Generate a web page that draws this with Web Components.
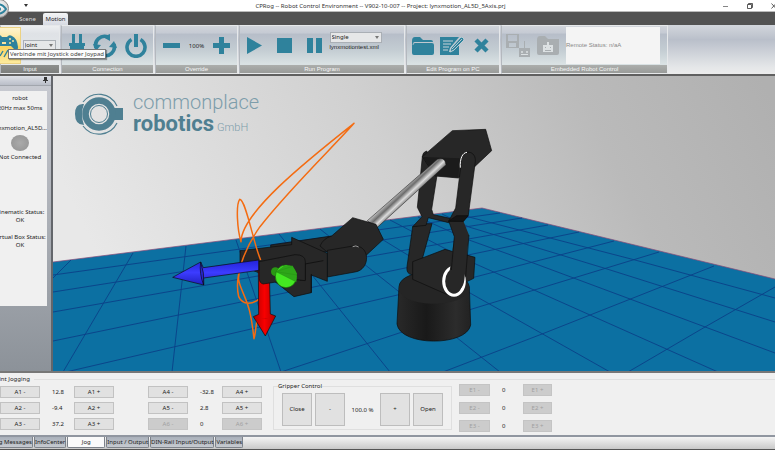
<!DOCTYPE html>
<html lang="en">
<head>
<meta charset="utf-8">
<title>CPRog - Robot Control Environment</title>
<style>
  html, body { margin: 0; height: 100%; }
  body { font: 6px/8px "Noto Sans", "Open Sans", sans-serif; color: #222; background: #f0f0f0; overflow: hidden; }
</style>
</head>
<body>
<cprog-app></cprog-app>

<script>
const define = (name, html) => {
  customElements.define(name, class extends HTMLElement {
    constructor() {
      super();
      this.attachShadow({ mode: 'open' });
    }
    connectedCallback() {
      if (this.shadowRoot.childNodes.length) return;
      this.shadowRoot.innerHTML = typeof html === 'function' ? html(this) : html;
    }
  });
};

/* ---------- icons ---------- */
const ICONS = {
  gamepad: [28, 24, '<path d="M8 2Q10 0 12 3H17Q19 0 22 2Q27 4 28 13Q28 17 25 16L21 12H8L4 16Q0 17 1 12Q2 4 8 2Z"/><g fill="#f8e3a0"><circle cx="20" cy="5" r="1"/><circle cx="23" cy="7" r="1"/><circle cx="20" cy="9" r="1"/><path d="M12 8h4v2h-4z"/></g><path d="M13 17l-3 5M18 16l-4 7M22 17l-3 4" stroke="currentColor" stroke-width="1.4"/>'],
  plug: [16, 24, '<path d="M4 0h2v9h4V0h2v9h4v3h-1v4q0 3-5 4v4H6v-4q-5-1-5-4v-4H0V9h4z"/><path d="M3 0h3v9H3zM10 0h3v9h-3z"/>'],
  refresh: [24, 24, '<path d="M3 14A9 9 0 0 1 15 3M21 10A9 9 0 0 1 9 21" fill="none" stroke="currentColor" stroke-width="3.6"/><path d="M0 10L8 11L3 17ZM24 14L16 13L21 7ZM7 17L14 21L7 24ZM17 7L10 3L17 0Z"/>'],
  power: [22, 24, '<path d="M6.500 5.500A9 9 0 1 0 15.500 5.500" fill="none" stroke="currentColor" stroke-width="3.600"/><path d="M9 0h4v13H9z"/>'],
  minus: [17, 17, '<path d="M0 6h17v5H0z"/>'],
  plus: [17, 17, '<path d="M6 0h5v6h6v5h-6v6H6v-6H0V6h6z"/>'],
  play: [15, 17, '<path d="M0 0L15 8.500L0 17Z"/>'],
  stop: [15, 15, '<path d="M0 0h15v15H0z"/>'],
  pause: [15, 15, '<path d="M0 0h6v15H0zM9 0h6v15H9z"/>'],
  folder: [22, 18, '<path d="M0 4Q0 0 3 0h5l3 3h8q2 0 2 2H3Q1 5 1 7L0 8ZM0 8Q0 6 3 6H20Q22 6 22 8V16Q22 18 20 18H2Q0 18 0 16Z"/><path d="M1 8Q1 5.500 3 5.500H20" fill="none" stroke="#c3c9d0" stroke-width=".7"/>'],
  edit: [25, 18, '<path d="M0 0H19L10 11L9 15L13 14L19 7V18H0Z"/><path d="M3 4h10M3 7h8M3 10h6M3 13h5" stroke="#c8d2d8"/><path d="M11 11L21 0Q24 0 24 3L14 13L10 15Z" stroke="#d3dade" stroke-width=".8"/><path d="M12 12L22 2" stroke="#d3dade" stroke-width=".8"/>'],
  cross: [15, 15, '<path d="M2 2L13 13M13 2L2 13" stroke="currentColor" stroke-width="4.400"/>'],
  saverobot: [25, 24, '<path fill-rule="evenodd" d="M0 0h13v14H0zM2 1v6h9V1zM3 9v4h7V9zM18 7h1v7h5v9H13v-9h5z"/><g fill="#dce1e3"><circle cx="16" cy="18" r="1"/><circle cx="21" cy="18" r="1"/><path d="M15 20h7v1h-7z"/></g>'],
  openrobot: [22, 19, '<path d="M0 4Q0 0 3 0h5l3 3h11V17Q22 19 20 19H2Q0 19 0 17Z"/><path d="M6 9h4V6h2v3h4v7H6z" fill="#dce1e3"/><path d="M8 11h1v1H8zM13 11h1v1h-1zM8 14h6v1H8z"/>'],
  eye: [16, 12, '<path d="M0 6Q8-3 14 6Q8 15 0 6Z" fill="none" stroke="currentColor" stroke-width="2"/><circle cx="7" cy="6" r="2"/>'],
  pin: [6, 6, '<path d="M2 0h3v3h1v1H4v2H3V4H1V3h1z"/>'],
  min: [6, 6, '<path d="M0 3h5v.6H0z"/>'],
  max: [6, 6, '<path d="M.5 1.500h4v4h-4zM1.500 1.500V.5h4v4h-1" fill="none" stroke="currentColor" stroke-width=".8"/>'],
  close: [6, 6, '<path d="M.5 .5L5 5.500M5 .5L.5 5.500" stroke="currentColor" stroke-width=".8"/>'],
  down: [4, 3, '<path d="M0 0h4L2 3z"/>']
};
define('ui-icon', el => {
  const [w, h, body] = ICONS[el.getAttribute('name')];
  return `<style>:host{display:block;flex:none;line-height:0}svg{display:block;fill:currentColor}</style>
    <svg width="${w}" height="${h}" viewBox="0 0 ${w} ${h}" aria-hidden="true">${body}</svg>`;
});

define('icon-button', el => `
  <style>
    :host { display: block; flex: none; }
    button { display: grid; place-items: center; padding: 0; border: 0; background: none; color: inherit; }
  </style>
  <button type="button" aria-label="${el.getAttribute('label')}" ${el.hasAttribute('disabled') ? 'disabled' : ''}>
    <ui-icon name="${el.getAttribute('icon')}"></ui-icon></button>`);

/* ---------- title bar ---------- */
define('title-bar', `
  <style>
    :host { display: grid; grid-template-columns: 1fr auto 1fr; align-items: center; height: 11px; background: #fff; color: #333; border-bottom: 1px solid #bbb; position: relative; }
    .orb { position: absolute; z-index: 2; left: -10px; top: -1px; width: 19px; height: 19px; border-radius: 50%; border: 1px solid #888;
           background: radial-gradient(circle at 50% 35%, #fff, #ccc 70%, #aaa); color: #2f829c; display: grid; place-items: center; overflow: hidden; padding: 0; }
    .quick { padding-left: 24px; }
    .win { display: flex; justify-content: flex-end; gap: 18px; }
    .win icon-button:last-child { margin-right: -2px; }
    h1 { margin: 0; padding-right: 14px; font: 6px/8px "Noto Sans", sans-serif; white-space: nowrap; }
  </style>
  <button class="orb" aria-label="Application menu"><ui-icon name="eye"></ui-icon></button>
  <div class="quick"><ui-icon name="down"></ui-icon></div>
  <h1>CPRog -- Robot Control Environment -- V902-10-007 -- Project: lynxmotion_AL5D_5Axis.prj</h1>
  <div class="win"><icon-button icon="min" label="Minimize"></icon-button><icon-button icon="max" label="Restore"></icon-button><icon-button icon="close" label="Close"></icon-button></div>`);

/* ---------- ribbon ---------- */
define('ribbon-tabs', `
  <style>
    :host { display: flex; align-items: flex-end; height: 13px; padding-left: 12px; background: #525252; }
    button { font: 6px/11px "Noto Sans", sans-serif; height: 12px; padding: 0 4px; border: 0; background: none; color: #ddd; width: 31px; }
    button[aria-selected=true] { background: linear-gradient(#f4f5f6, #d6dae2); color: #222; border-radius: 2px 2px 0 0; width: 25px; padding: 0; }
  </style>
  <button role="tab" aria-selected="false">Scene</button><button role="tab" aria-selected="true">Motion</button>`);

define('ribbon-group', el => `
  <style>
    :host { display: flex; flex-direction: column; flex: none; box-sizing: border-box; height: 49px; border: 1px solid #e6e8ea; border-left-color: #b4b8be;
            background: linear-gradient(#d0d4da 0, #c6cbd4 14%, #b7bec9 18%, #c3ccd2 50%, #d9e1e3 80%); color: #2f829c; }
    .body { flex: 1; display: flex; align-items: center; justify-content: center; gap: var(--gap, 8px); padding: 0 4px; min-height: 0; }
    .cap { height: 8px; background: linear-gradient(#acaeac, #999b99); color: #f8f8f8; font: 6px/8px "Liberation Sans", sans-serif; text-align: center; }
    :host([active]) .body { background: linear-gradient(#eceef0, #dfe2e6 20%, #e6eaec); }
    :host([active]) .cap { background: linear-gradient(#8e908e, #7c7e7c); }
  </style>
  <div class="body"><slot></slot></div><div class="cap">${el.getAttribute('caption')}</div>`);

define('drop-down', el => `
  <style>
    :host { display: flex; align-items: center; box-sizing: border-box; height: 11px; background: #e6e7e8; border: 1px solid #aaafb5; color: #222; }
    select { appearance: none; flex: 1; min-width: 0; border: 0; padding: 0 0 0 1px; background: none; color: inherit; font: 6px/9px "Noto Sans", sans-serif; }
    ui-icon { margin-right: 2px; color: #777; }
  </style>
  <select aria-label="${el.getAttribute('label')}"><option>${el.getAttribute('value')}</option></select>
  <ui-icon name="down"></ui-icon>`);

define('ribbon-bar', `
  <style>
    :host { display: flex; gap: 1px; height: 49px; background: linear-gradient(#d2d6dc, #c2c7d0 20%, #b9bfca 30%, #e4e6e8 85%, #ececec); border-bottom: 2px solid #606060; position: relative; }
    .input { width: 60px; --gap: 2px; }
    .pad { display: grid; place-items: center; flex: none; box-sizing: border-box; width: 34px; height: 37px; margin-left: -18px; background: linear-gradient(#fdf4cf, #fbe08a 45%, #fbd45f 55%, #fdeb9e); border: 1px solid #ecd283; }
    .mode { flex: none; width: 33px; }
    .run { display: grid; width: 52px; color: #222; font: 6px/8px "Liberation Sans", sans-serif; margin: -8px 16px 0 -7px; }
    .edit { width: 94px; --gap: 6px; }
    .edit icon-button:last-child { margin: 0 6px 0 3px; }
    .off { color: #a9aeb1; width: 167px; --gap: 6px; }
    output { box-sizing: border-box; width: 95px; height: 37px; margin: 0 3px 0 1px; background: #f4f4f4; color: #888; font: 6px/37px "Liberation Sans", sans-serif; }
    .tip { position: absolute; z-index: 3; left: 8px; top: 24px; box-sizing: border-box; height: 10px; padding: 0 1px; border: 1px solid #777; background: #fcfcfc; color: #444; font: 6px/8px "Noto Sans", sans-serif; white-space: nowrap; box-shadow: 1px 1px 1px #0005; }
    .pct { width: 17px; text-align: center; color: #222; }
  </style>
  <ribbon-group active class="input" caption="Input">
    <span class="pad"><icon-button icon="gamepad" label="Verbinde mit Joystick oder Joypad"></icon-button></span>
    <drop-down class="mode" label="Jog mode" value="Joint"></drop-down>
  </ribbon-group>
  <ribbon-group caption="Connection" style="width:93px">
    <icon-button icon="plug" label="Connect"></icon-button><icon-button icon="refresh" label="Reset"></icon-button><icon-button icon="power" label="Enable"></icon-button>
  </ribbon-group>
  <ribbon-group caption="Override" style="width:83px">
    <icon-button icon="minus" label="Slower"></icon-button><span class="pct">100%</span><icon-button icon="plus" label="Faster"></icon-button>
  </ribbon-group>
  <ribbon-group caption="Run Program" style="width:166px;--gap:15px">
    <icon-button icon="play" label="Play"></icon-button><icon-button icon="stop" label="Stop"></icon-button><icon-button icon="pause" label="Pause"></icon-button>
    <div class="run"><drop-down label="Run mode" value="Single"></drop-down><span>lynxmotiontest.xml</span></div>
  </ribbon-group>
  <ribbon-group class="edit" caption="Edit Program on PC">
    <icon-button icon="folder" label="Open program"></icon-button><icon-button icon="edit" label="Edit program"></icon-button><icon-button icon="cross" label="Close program"></icon-button>
  </ribbon-group>
  <ribbon-group class="off" caption="Embedded Robot Control">
    <icon-button disabled icon="saverobot" label="Save to robot"></icon-button><icon-button disabled icon="openrobot" label="Open on robot"></icon-button>
    <output>Remote Status: n/aA</output>
  </ribbon-group>
  <div class="tip" role="tooltip">Verbinde mit Joystick oder Joypad</div>`);

/* ---------- side panel ---------- */
define('status-panel', `
  <style>
    :host { display: flex; flex-direction: column; box-sizing: border-box; width: 53px; overflow: hidden; background: linear-gradient(#c9cbd2, #8c9299); border-right: 2px solid #63666b; }
    header { display: flex; justify-content: flex-end; height: 10px; padding: 1px 3px 0 0; box-sizing: border-box; background: linear-gradient(#dde0e6, #babec8); color: #333; border-bottom: 1px solid #a2a6ad; }
    section { flex: none; box-sizing: border-box; height: 215px; margin: 5px 4px 0 -7px; padding-top: 3px; background: #f0f0f0; display: flex; flex-direction: column; align-items: center; white-space: nowrap; }
    p { margin: 0; }
    .rate { margin-top: 2px; } .name { margin-top: 12px; }
    .led { width: 18px; height: 16px; margin: 3px 0 2px; border-radius: 50%; background: radial-gradient(#aaa, #929292); }
    .kin { margin-top: 47px; } .box { margin-top: 9px; }
  </style>
  <header><icon-button icon="pin" label="Pin panel"></icon-button></header>
  <section>
    <p>robot</p><p class="rate">20Hz max 50ms</p><p class="name">lynxmotion_AL5D...</p>
    <div class="led"></div><p>Not Connected</p>
    <p class="kin">Kinematic Status:</p><p>OK</p><p class="box">Virtual Box Status:</p><p>OK</p>
  </section>`);

/* ---------- 3D view ---------- */
define('robot-view', `
  <style>
    :host { display: block; flex: 1; min-width: 0; background: #c4c4c4; overflow: hidden; }
    svg { display: block; width: 100%; height: 100%; }
    text { font-family: Roboto, sans-serif; }
  </style>
  <svg viewBox="53 76 722 296" preserveAspectRatio="xMinYMin slice" role="img" aria-label="Robot arm in 3D view">
    <defs>
      <linearGradient id="wall" x1="0" y1=".3" x2="1" y2=".1"><stop offset="0" stop-color="#e8e8e8"/><stop offset=".45" stop-color="#d0d0d0"/><stop offset=".75" stop-color="#bababa"/><stop offset="1" stop-color="#b0b0b0"/></linearGradient>
      <linearGradient id="rod" gradientUnits="userSpaceOnUse" x1="150" y1="202" x2="178" y2="232"><stop offset="0" stop-color="#e8e8e8"/><stop offset=".25" stop-color="#aaa"/><stop offset=".5" stop-color="#6c6c6c"/><stop offset=".8" stop-color="#ddd"/><stop offset="1" stop-color="#999"/></linearGradient>
      <linearGradient id="base"><stop offset="0" stop-color="#292929"/><stop offset=".4" stop-color="#191919"/><stop offset=".8" stop-color="#2c2c2c"/><stop offset="1" stop-color="#222"/></linearGradient>
      <linearGradient id="blue" x2="0" y2="1"><stop offset="0" stop-color="#2222d8"/><stop offset=".5" stop-color="#3c3cff"/><stop offset="1" stop-color="#2020c0"/></linearGradient>
      <linearGradient id="red"><stop offset="0" stop-color="#b00000"/><stop offset=".5" stop-color="#f80000"/><stop offset="1" stop-color="#b00000"/></linearGradient>
    </defs>
    <path fill="url(#wall)" d="M53 76h722v296H53z"/>
    <path fill="#0c70a2" d="M53 262L482 208L775 279V372H53Z"/>
    <path fill="none" stroke="#8a4a78" stroke-width=".7" d="M53 262L482 208L775 279"/>
    <path fill="none" stroke="#0b4188" stroke-width=".9" d="M53 275L500 213M53 292L522 218M53 312L548 225M53 341L579 232M53 375L475 277L614 241M281 372L472 309L659 252M443 372L542 334L714 266M628 372L705 327L775 287
      M71 260L53 278M133 253L63 372M186 246L172 372M236 240L281 372M279 234L390 372M320 229L500 372M357 224L470 293L610 372M390 220L469 261L590 315L718 372M418 217L469 240L536 264L775 353M442 214L469 227L607 269L775 322M462 211L469 217L635 260L775 298"/>

    <g fill="#4f7f91">
      <path d="M84 104Q75 103 75 114Q75 125 84 125Q80 114 84 104ZM112 108H123V120H112Z"/>
      <circle cx="99" cy="114" r="13.500" fill="none" stroke="#4f7f91" stroke-width="6.500"/>
      <path d="M117 106A20 20 0 0 0 83 102M117 123A20 20 0 0 1 83 126" fill="none" stroke="#4f7f91" stroke-width="1.200"/>
      <circle cx="99" cy="114" r="8.500" fill="none" stroke="#4f7f91"/>
    </g>
    <text x="133" y="109" font-size="20" font-weight="300" fill="#7d9dab">commonplace</text>
    <text x="133" y="131" font-size="22" font-weight="700" fill="#4f7f91">robotics</text>
    <text x="217" y="131" font-size="11" font-weight="300" fill="#7d9dab">GmbH</text>

    <g transform="translate(350 120) scale(.33333)" stroke="#0c0c0c" stroke-width="2" stroke-linejoin="round" fill="#272727">
      <path fill="url(#base)" d="M147 500L141 612C150 680 350 680 362 615L358 500C350 440 150 440 147 500Z"/>
      <path stroke="none" fill="#252525" d="M147 505C150 567 352 567 358 505C350 440 150 440 147 505Z"/>
      <path d="M340 402L375 412L371 475L340 490Z"/>
      <path d="M188 320L230 311H246L216 420L195 464H186Q168 462 171 440Z"/>
      <path d="M188 425L285 388L340 404L330 510L290 523L188 478Z"/>
      <path d="M217 110Q218 96 230 93L262 160L245 268L250 284L300 295L320 300L296 308L235 293L228 316L188 320L216 290L202 262Z"/>
      <ellipse cx="312" cy="484" rx="31" ry="42" stroke="#fff" stroke-width="9"/>
      <path d="M296 303H340L357 345L343 480C338 520 298 528 294 490L313 350Z" stroke="none"/>
      <path d="M357 345L347 470M313 350L304 450M296 303L313 350" fill="none"/>
      <path d="M217 110L307 32L407 28L425 92L374 140L325 174L255 168Z"/>
      <path fill="#1b1b1b" stroke="none" d="M219 111L330 115L325 173L255 167Z"/>
      <path d="M332 142V125C333 86 379 88 376 125L355 285L340 304H296L317 264Z"/>
      <path d="M331 143C329 115 338 98 351 97" fill="none" stroke="#fff" stroke-width="3"/>
      <path d="M296 303L320 287H355L340 304Z" fill="#151515"/>
      <path d="M52 302L262 118Q284 108 288 134L80 324Z" fill="url(#rod)" stroke-width="1.500"/>
    </g>

    <g transform="translate(160 110) scale(.33333)" stroke="#0c0c0c" stroke-width="2" stroke-linejoin="round" fill="#272727">
      <path d="M332 405L515 378L500 425L332 430Z"/>
      <path d="M578 323L648 343L670 388L612 442L500 425L480 408Q490 385 515 378Z"/>
      <path d="M502 421L580 408C630 402 634 478 585 486L502 501Z"/>
      <path d="M578 410Q588 405 596 411" fill="none" stroke="#ddd"/>
      <path d="M240 422L395 404V382L502 430V514L454 495V548L402 560L345 515L300 490L240 465Z"/>
      <path d="M435 462L490 452M435 462V510H420M454 492V548" fill="none" stroke="#080808"/>
      <path fill="none" stroke="#f46c12" stroke-width="4.500" d="M302 450C280 400 258 270 239 268C227 285 232 360 243 395C244 310 430 160 582 40C530 100 390 235 300 350C252 418 222 500 236 560C250 590 280 580 296 568M240 525C260 580 270 580 282 686C288 665 287 640 294 620M242 460V480C230 500 238 520 240 525"/>
      <path fill="url(#red)" d="M295 480H328L331 612L347 618L316 678L280 620L296 613Z"/>
      <path fill="#c00000" stroke="none" d="M281 620Q315 630 346 619L316 626Z"/>
      <path d="M297 455L405 434Q436 434 436 455V512L400 508L310 522Q298 520 298 505Z"/>
      <path fill="url(#blue)" d="M130 473L296 450V481L131 504V525L38 502L122 456Z"/>
      <path fill="#2626c8" d="M122 456Q134 488 131 525Q117 490 122 456Z"/>
      <circle cx="346" cy="485" r="13" fill="#2a9814" stroke="none"/>
      <ellipse cx="378" cy="499" rx="32" ry="34" fill="#44e822" stroke="#176a0a"/>
      <path fill="#2ea719" stroke="none" d="M348 485L372 467H398L410 490L409 516Z"/>
      <path fill="none" stroke="#1f8a10" stroke-width="1" d="M348 485L409 516M348 485L411 495M348 485L398 469"/>
    </g>
  </svg>`);

/* ---------- jogging panel ---------- */
define('jog-row', el => {
  const a = el.getAttribute('axis'), off = el.hasAttribute('disabled') ? 'disabled' : '';
  return `
  <style>
    :host { display: grid; grid-template-columns: var(--cols, 40px 10px 40px); column-gap: 12px; align-items: center; height: 12px; }
    button { box-sizing: border-box; height: 12px; padding: 0; border: 1px solid #c2c2c2; background: #e1e1e1; color: #222; font: 6px/9px "Noto Sans", sans-serif; }
    button:disabled { background: #ccc; border-color: #c4c4c4; color: #a0a0a0; }
    output { white-space: nowrap; }
  </style>
  <button type="button" ${off}>${a} -</button><output>${el.getAttribute('value')}</output><button type="button" ${off}>${a} +</button>`;
});

define('gripper-box', `
  <style>
    :host { display: block; }
    fieldset { box-sizing: border-box; margin: 0; padding: 3px 8px 3px; border: 1px solid #dfdfdf; width: 179px; min-width: 0; }
    legend { padding: 0; margin-left: -4px; line-height: 7px; }
    .row { display: grid; grid-template-columns: 30px 30px 29px 30px 30px; column-gap: 3px; align-items: center; text-align: center; }
    button { box-sizing: border-box; height: 33px; padding: 0; border: 1px solid #bdbdbd; background: #e1e1e1; color: #222; font: 6px/9px "Noto Sans", sans-serif; }
    output { white-space: nowrap; }
  </style>
  <fieldset><legend>Gripper Control</legend>
    <div class="row"><button>Close</button><button>-</button><output>100.0 %</output><button>+</button><button>Open</button></div>
  </fieldset>`);

define('jog-panel', `
  <style>
    :host { display: block; box-sizing: border-box; padding: 2px 0 3px; background: #f0f0f0; border-top: 2px solid #777; }
    .title { display: flex; align-items: center; gap: 4px; height: 8px; margin-left: -6px; white-space: nowrap; }
    .title::after { content: ""; flex: 1; height: 1px; background: #e0e0e0; }
    .cols { display: flex; align-items: flex-start; }
    .axes { display: grid; row-gap: 4px; padding-top: 3px; }
    .second { margin-left: 34px; }
    gripper-box { margin-left: 11px; }
    .ext { margin-left: 7px; row-gap: 6px; padding-top: 1px; --cols: 31px 9px 29px; }
  </style>
  <div class="title">Joint Jogging</div>
  <div class="cols">
    <div class="axes"><jog-row axis="A1" value="12.8"></jog-row><jog-row axis="A2" value="-9.4"></jog-row><jog-row axis="A3" value="37.2"></jog-row></div>
    <div class="axes second"><jog-row axis="A4" value="-32.8"></jog-row><jog-row axis="A5" value="2.8"></jog-row><jog-row axis="A6" value="0" disabled></jog-row></div>
    <gripper-box></gripper-box>
    <div class="axes ext"><jog-row axis="E1" value="0" disabled></jog-row><jog-row axis="E2" value="0" disabled></jog-row><jog-row axis="E3" value="0" disabled></jog-row></div>
  </div>`);

define('bottom-tabs', `
  <style>
    :host { display: flex; gap: 1px; box-sizing: border-box; height: 15px; padding-bottom: 2px; border-top: 2px solid #9096a0; border-bottom: 1px solid #555; background: linear-gradient(#f4f4f4, #c9c9c9); overflow: hidden; }
    button { flex: none; height: 11px; padding: 0; border: 1px solid #7d828a; border-top: 0; border-radius: 0 0 2px 2px; background: linear-gradient(#a9b0ba, #c6cad0); color: #222; font: 6px/9px "Noto Sans", sans-serif; white-space: nowrap; }
    [aria-selected=true] { width: 38px; background: #fafafa; }
    button:first-of-type { margin-left: -9px; }
  </style>
  <button role="tab">Log Messages</button><button role="tab">InfoCenter</button><button role="tab" aria-selected="true">Jog</button><button role="tab">Input / Output</button><button role="tab">DIN-Rail Input/Output</button><button role="tab">Variables</button>`);

define('cprog-app', `
  <style>
    :host { display: flex; flex-direction: column; height: 100vh; overflow: hidden; }
    main { flex: 1; display: flex; min-height: 0; }
    title-bar, ribbon-tabs, ribbon-bar, jog-panel, bottom-tabs { flex: none; }
  </style>
  <title-bar></title-bar><ribbon-tabs></ribbon-tabs><ribbon-bar></ribbon-bar>
  <main><status-panel></status-panel><robot-view></robot-view></main>
  <jog-panel></jog-panel><bottom-tabs></bottom-tabs>`);
</script>
</body>
</html>
